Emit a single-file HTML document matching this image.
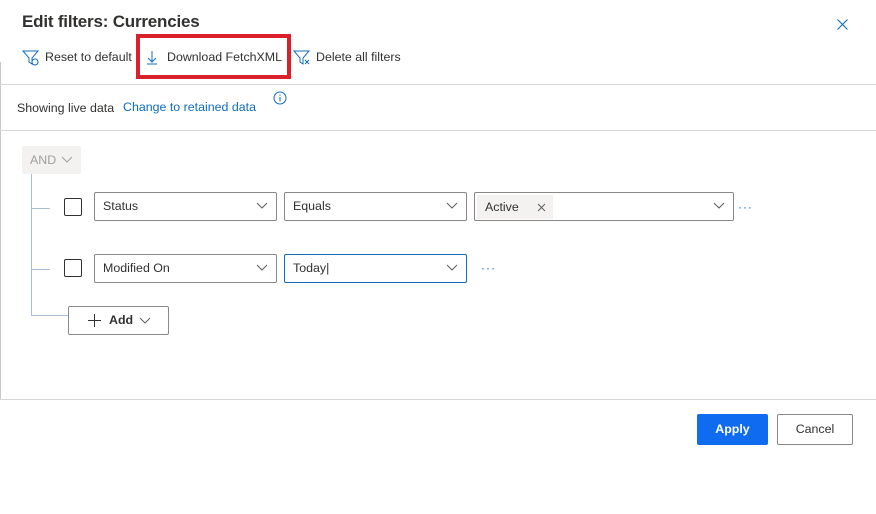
<!DOCTYPE html>
<html><head><meta charset="utf-8"><style>
*{box-sizing:border-box;margin:0;padding:0}
body{width:876px;height:514px;background:#fff;position:relative;font-family:"Liberation Sans",sans-serif;font-size:12.4px;color:#323130;overflow:hidden}
.a{position:absolute}
.dd{position:absolute;height:29px;border:1px solid #8a8886;border-radius:2px;background:#fff;padding:0 8px;line-height:27px}
.chev{position:absolute;right:8px;top:9px}
.cb{position:absolute;width:18px;height:18px;border:1px solid #323130;border-radius:2px}
.hl{position:absolute;height:1px;background:#a9bfd6}
.dots{position:absolute;color:#0f6cbd;font-size:12px;letter-spacing:1px}
</style></head><body>
<div class="a" style="left:22px;top:12px;font-size:17px;font-weight:bold;color:#323130;letter-spacing:-0.2px">Edit filters: Currencies</div>
<svg class="a" style="left:836px;top:18px" width="13" height="13"><path d="M1.5 1.5L11.5 11.5M11.5 1.5L1.5 11.5" stroke="#0f6cbd" stroke-width="1.1"/></svg>

<svg class="a" style="left:22px;top:50px" width="18" height="16"><path d="M1 1H16L10 8V14L7 12V8Z" fill="none" stroke="#0f6cbd" stroke-width="1"/><circle cx="13" cy="12" r="3" fill="#fff" stroke="#0f6cbd"/></svg>
<div class="a" style="left:45px;top:50px">Reset to default</div>
<div class="a" style="left:136px;top:34px;width:155px;height:45px;border:4px solid #d9202b"></div>
<svg class="a" style="left:146px;top:50px" width="12" height="15"><path d="M6 1V12M2 8L6 12L10 8M1 14H11" fill="none" stroke="#0f6cbd" stroke-width="1"/></svg>
<div class="a" style="left:167px;top:50px">Download FetchXML</div>
<svg class="a" style="left:293px;top:50px" width="18" height="16"><path d="M1 1H16L10 8V14L7 12V8Z" fill="none" stroke="#0f6cbd" stroke-width="1"/><path d="M12 10L16 14M16 10L12 14" stroke="#0f6cbd"/></svg>
<div class="a" style="left:316px;top:50px">Delete all filters</div>

<div class="a" style="left:0;top:62px;width:1px;height:338px;background:#c8c8c8"></div>
<div class="a" style="left:0;top:84px;width:876px;height:1px;background:#d6d6d6"></div>
<div class="a" style="left:0;top:130px;width:876px;height:1px;background:#d6d6d6"></div>
<div class="a" style="left:0;top:399px;width:876px;height:1px;background:#d6d6d6"></div>

<div class="a" style="left:17px;top:101px">Showing live data</div>
<div class="a" style="left:123px;top:100px;color:#0f6cbd">Change to retained data</div>
<svg class="a" style="left:273px;top:91px" width="14" height="14"><circle cx="7" cy="7" r="6" fill="none" stroke="#0f6cbd"/><path d="M7 6V10.5M7 3.5V4.7" stroke="#0f6cbd"/></svg>

<div class="a" style="left:22px;top:146px;width:59px;height:28px;background:#f3f2f1;border-radius:2px"></div>
<div class="a" style="left:30px;top:153px;color:#a19f9d">AND</div>
<svg class="a" style="left:61px;top:156px" width="12" height="8"><path d="M1 1L6 6L11 1" fill="none" stroke="#a19f9d"/></svg>

<div class="a" style="left:31px;top:174px;width:1px;height:142px;background:#a9bfd6"></div>
<div class="hl" style="left:31px;top:208px;width:19px"></div>
<div class="hl" style="left:31px;top:269px;width:19px"></div>
<div class="hl" style="left:31px;top:315px;width:38px"></div>

<div class="cb" style="left:64px;top:198px"></div>
<div class="dd" style="left:94px;top:192px;width:183px">Status<svg class="chev" width="12" height="8"><path d="M1 1L6 6L11 1" fill="none" stroke="#605e5c"/></svg></div>
<div class="dd" style="left:284px;top:192px;width:183px">Equals<svg class="chev" width="12" height="8"><path d="M1 1L6 6L11 1" fill="none" stroke="#605e5c"/></svg></div>
<div class="dd" style="left:474px;top:192px;width:260px;padding:0">
<div class="a" style="left:2px;top:2px;width:76px;height:24px;background:#f3f2f1;line-height:24px;padding-left:8px">Active<svg style="position:absolute;left:60px;top:8px" width="9" height="9"><path d="M1 1L8 8M8 1L1 8" stroke="#605e5c"/></svg></div>
<svg class="chev" width="12" height="8"><path d="M1 1L6 6L11 1" fill="none" stroke="#605e5c"/></svg></div>
<div class="dots" style="left:738px;top:200px">···</div>

<div class="cb" style="left:64px;top:259px"></div>
<div class="dd" style="left:94px;top:254px;width:183px">Modified On<svg class="chev" width="12" height="8"><path d="M1 1L6 6L11 1" fill="none" stroke="#605e5c"/></svg></div>
<div class="dd" style="left:284px;top:254px;width:183px;border-color:#0f6cbd">Today|<svg class="chev" width="12" height="8"><path d="M1 1L6 6L11 1" fill="none" stroke="#605e5c"/></svg></div>
<div class="dots" style="left:481px;top:261px">···</div>

<div class="a" style="left:68px;top:306px;width:101px;height:29px;border:1px solid #8a8886;border-radius:2px"></div>
<svg class="a" style="left:87px;top:313px" width="15" height="15"><path d="M7.5 1V14M1 7.5H14" stroke="#323130"/></svg>
<div class="a" style="left:109px;top:313px;font-weight:bold">Add</div>
<svg class="a" style="left:139px;top:317px" width="12" height="8"><path d="M1 1L6 6L11 1" fill="none" stroke="#605e5c"/></svg>

<div class="a" style="left:697px;top:414px;width:71px;height:31px;background:#0f6cf0;border-radius:2px;color:#fff;font-weight:bold;text-align:center;line-height:31px">Apply</div>
<div class="a" style="left:777px;top:414px;width:76px;height:31px;border:1px solid #8a8886;border-radius:2px;text-align:center;line-height:29px">Cancel</div>
</body></html>
